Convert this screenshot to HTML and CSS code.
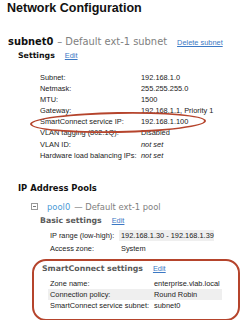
FILE: index.html
```html
<!DOCTYPE html>
<html lang="en">
<head>
    <meta charset="UTF-8">
    <title>Network Configuration</title>
    <link rel="stylesheet" href="styles.css">
</head>
<body>
    <h1 class="page-title">Network Configuration</h1>

    <div class="subnet-head">
        <span class="subnet-name">subnet0</span>
        <span class="subnet-desc">&ndash; Default ext-1 subnet</span>
        <a class="link delete-link" href="#">Delete subnet</a>
    </div>

    <div class="section-head">
        <span class="section-title">Settings</span>
        <a class="link" href="#">Edit</a>
    </div>

    <div class="props subnet-props">
        <div class="label">Subnet:</div><div class="value">192.168.1.0</div>
        <div class="label">Netmask:</div><div class="value">255.255.255.0</div>
        <div class="label">MTU:</div><div class="value">1500</div>
        <div class="label">Gateway:</div><div class="value">192.168.1.1, Priority 1</div>
        <div class="label marked">SmartConnect service IP:</div><div class="value">192.168.1.100</div>
        <div class="label">VLAN tagging (802.1Q):</div><div class="value">Disabled</div>
        <div class="label">VLAN ID:</div><div class="value"><em>not set</em></div>
        <div class="label">Hardware load balancing IPs:</div><div class="value"><em>not set</em></div>
    </div>

    <div class="pools-head">IP Address Pools</div>

    <div class="pool-head">
        <span class="toggle"></span>
        <span class="pool-name">pool0</span>
        <span class="pool-desc">&mdash; Default ext-1 pool</span>
    </div>

    <div class="pool-body">
        <div class="sub-head">
            <span class="sub-title">Basic settings</span>
            <a class="link" href="#">Edit</a>
        </div>
        <div class="props pool-props basic-props">
            <div class="label">IP range (low-high):</div><div class="value shaded">192.168.1.30 - 192.168.1.39</div>
            <div class="label">Access zone:</div><div class="value">System</div>
        </div>

        <div class="sc-box">
            <div class="sub-head">
                <span class="sub-title">SmartConnect settings</span>
                <a class="link" href="#">Edit</a>
            </div>
            <div class="sc-props">
                <div class="sc-row"><span class="label">Zone name:</span><span class="value">enterprise.vlab.local</span></div>
                <div class="sc-row shaded"><span class="label">Connection policy:</span><span class="value">Round Robin</span></div>
                <div class="sc-row"><span class="label">SmartConnect service subnet:</span><span class="value">subnet0</span></div>
            </div>
        </div>
    </div>
</body>
</html>
```

FILE: styles.css
```css
body {
    margin: 0;
    padding: 0;
    background-color: #fff;
    color: #222;
    font-family: "Liberation Sans", Arial, sans-serif;
}
.link {
    color: #3b78c4;
    text-decoration: underline;
    font-family: "Liberation Sans", Arial, sans-serif;
    font-size: 7.4px;
}
.page-title {
    margin: 0;
    padding: 1px 0 0 7px;
    font-size: 12.5px;
    line-height: 15px;
    font-weight: bold;
    color: #111;
}
.subnet-head {
    margin-top: 19px;
    padding-left: 8px;
    display: flex;
    align-items: baseline;
    font-family: "DejaVu Sans", Verdana, sans-serif;
    font-size: 9.9px;
    line-height: 13px;
}
.subnet-name {
    font-weight: bold;
    color: #111;
}
.subnet-desc {
    color: #808080;
    margin-left: 4px;
}
.delete-link {
    margin-left: 10px;
}
.section-head {
    padding-left: 18px;
    display: flex;
    align-items: baseline;
    gap: 10px;
    line-height: 13px;
}
.section-title {
    font-family: "DejaVu Sans", Verdana, sans-serif;
    font-weight: bold;
    font-size: 7.8px;
    color: #111;
}
.props {
    display: grid;
    grid-template-columns: 101px auto;
    font-size: 7.4px;
    line-height: 11.1px;
}
.subnet-props {
    margin-top: 10px;
    padding-left: 40px;
}
.label {
    white-space: nowrap;
}
.marked {
    position: relative;
}
.marked::before {
    content: "";
    position: absolute;
    box-sizing: border-box;
    left: -10px;
    top: -4px;
    width: 176px;
    height: 21px;
    border: 2.8px solid #b5442c;
    border-radius: 50%;
    transform: rotate(-1deg);
}
.pools-head {
    margin-top: 21px;
    padding-left: 18px;
    font-family: "DejaVu Sans", Verdana, sans-serif;
    font-weight: bold;
    font-size: 8.4px;
    line-height: 12px;
    color: #111;
}
.pool-head {
    margin-top: 7px;
    padding-left: 31px;
    display: flex;
    align-items: center;
    font-family: "DejaVu Sans", Verdana, sans-serif;
    font-size: 8.4px;
    line-height: 12px;
}
.toggle {
    width: 5px;
    height: 5px;
    border: 1px solid #999;
    position: relative;
    margin-right: 9px;
}
.toggle::after {
    content: "";
    position: absolute;
    left: 1px;
    top: 2px;
    width: 3px;
    height: 1px;
    background: #777;
}
.pool-name {
    color: #4a9ad6;
}
.pool-desc {
    color: #808080;
    margin-left: 4px;
}
.pool-body {
    padding-left: 32px;
}
.sub-head {
    padding-left: 8px;
    display: flex;
    align-items: baseline;
    gap: 10px;
    line-height: 13px;
}
.pool-body > .sub-head {
    margin-top: 1px;
}
.sub-title {
    font-family: "DejaVu Sans", Verdana, sans-serif;
    font-weight: bold;
    font-size: 7.8px;
    color: #5a5a5a;
}
.basic-props {
    margin-top: 3px;
    padding-left: 18px;
    grid-template-columns: 69px auto;
    row-gap: 2px;
}
.pool-props .value {
    padding-left: 2px;
    justify-self: start;
}
.shaded {
    background-color: #efefef;
}
.sc-box {
    margin: 5px 9px 0 0;
    padding: 1px 0 8px;
    border: 2.5px solid #b5442c;
    border-radius: 14px;
}
.sc-props {
    margin: 3px 16px 0 14px;
    font-size: 7.4px;
    line-height: 11px;
}
.sc-row {
    display: grid;
    grid-template-columns: 104px auto;
    padding-left: 2px;
}
```
